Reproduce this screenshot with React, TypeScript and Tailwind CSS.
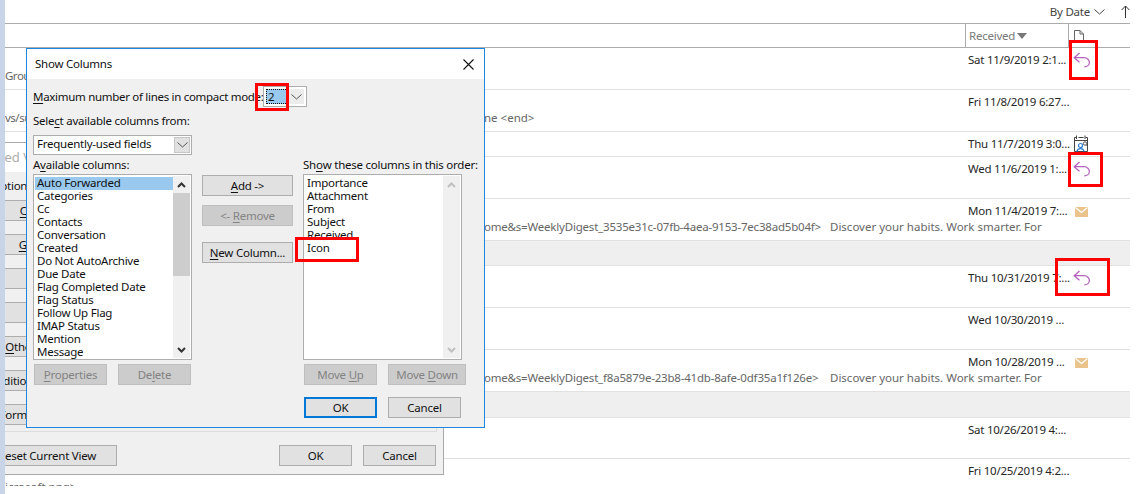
import React from "react";

const Reply = () => (
  <svg width="18" height="16" viewBox="0 0 18 16" fill="none" stroke="#b562be" strokeWidth="1.3" className="block">
    <path d="M6.5 1 L1.2 5.7 L6.5 10.2 M1.2 5.7 H11 C14.2 5.7 16.4 8 16.4 10.4 C16.4 12.8 14.2 14.8 11.3 14.8" />
  </svg>
);

const Envelope = () => (
  <svg width="13" height="10" viewBox="0 0 13 10" className="block">
    <rect width="13" height="10" fill="#eac48c" />
    <path d="M0.5 0.5 L6.5 5.5 L12.5 0.5" fill="none" stroke="#fff" strokeWidth="1.2" />
  </svg>
);

const CalendarIcon = () => (
  <svg width="16" height="17" viewBox="0 0 16 17" fill="none" className="block">
    <path d="M3.5 2.5H1.5V16.5H14.5V2.5H12.5M5.5 2.5H10.5" stroke="#444" />
    <path d="M3.5 0.5V4M12 0.5V4" stroke="#444" />
    <path d="M1.5 5.5H14.5" stroke="#444" />
    <circle cx="7.5" cy="10.5" r="2" stroke="#2b7cd3" strokeWidth="1.2" />
    <path d="M4 16.5C4.3 14.6 5.7 13.6 7.5 13.6C9.3 13.6 10.7 14.6 11 16.5" stroke="#2b7cd3" strokeWidth="1.3" />
    <circle cx="12" cy="8.5" r="1.7" stroke="#555" />
    <path d="M13.2 10L14.8 11.6" stroke="#555" />
  </svg>
);

const FileIcon = () => (
  <svg width="10" height="12" viewBox="0 0 10 12" fill="none" stroke="#666" className="block">
    <path d="M0.5 0.5H6L9.5 4V11.5H0.5Z M6 0.5V4H9.5" />
  </svg>
);

const Chevron = ({ color = "#555" }: { color?: string }) => (
  <svg width="11" height="6" viewBox="0 0 11 6" fill="none" stroke={color} strokeWidth="1" className="block">
    <path d="M0.5 0.5 L5.5 5 L10.5 0.5" />
  </svg>
);

const ArrowUpSmall = ({ color = "#333" }: { color?: string }) => (
  <svg width="9" height="6" viewBox="0 0 9 6" fill="none" stroke={color} strokeWidth="2" className="block">
    <path d="M1 5 L4.5 1.5 L8 5" />
  </svg>
);

const ArrowDownSmall = ({ color = "#333" }: { color?: string }) => (
  <svg width="9" height="6" viewBox="0 0 9 6" fill="none" stroke={color} strokeWidth="2" className="block">
    <path d="M1 1 L4.5 4.5 L8 1" />
  </svg>
);

type RowProps = {
  date?: string;
  icon?: React.ReactNode;
  left?: string;
  preview?: React.ReactNode;
  h: string;
};

const Row = ({ date, icon, left, preview, h }: RowProps) => (
  <div className={`${h} box-border border-b border-[#e1e1e1] overflow-hidden pt-[5px]`}>
    <div className="flex h-[15px] items-center pl-[963px]">
      <span className="w-[104px] mb-[2px] text-[#262626] whitespace-nowrap">{date}</span>
      <span className="ml-[3px]">{icon}</span>
    </div>
    <div className="relative flex h-[15px] items-center text-[#666] whitespace-pre">
      <span className="tracking-[-0.5px]">{left}</span>
      {preview && <span className="absolute left-[479px] tracking-normal">{preview}</span>}
    </div>
  </div>
);

const Digest = ({ id }: { id: string }) => (
  <span className="flex">
    <span className="w-[346px] tracking-[-0.2px]">ome&amp;s=WeeklyDigest_{id}&gt;</span>
    <span className="w-[194px]">Discover your habits. Work smarter.</span>
    <span>For</span>
  </span>
);

const Btn = ({
  children,
  w,
  disabled,
  primary,
}: {
  children: React.ReactNode;
  w: string;
  disabled?: boolean;
  primary?: boolean;
}) => (
  <div
    className={`${w} h-[21px] box-border flex items-center justify-center whitespace-nowrap ${
      primary
        ? "border-2 border-[#0078d7] bg-[#e1e1e1] text-[#111]"
        : disabled
          ? "border border-[#bfbfbf] bg-[#cccccc] text-[#838383]"
          : "border border-[#adadad] bg-[#e1e1e1] text-[#111]"
    }`}
  >
    {children}
  </div>
);

const available = [
  "Auto Forwarded",
  "Categories",
  "Cc",
  "Contacts",
  "Conversation",
  "Created",
  "Do Not AutoArchive",
  "Due Date",
  "Flag Completed Date",
  "Flag Status",
  "Follow Up Flag",
  "IMAP Status",
  "Mention",
  "Message",
];

const shown = ["Importance", "Attachment", "From", "Subject", "Received", "Icon"];

const U = ({ children }: { children: React.ReactNode }) => <span className="underline underline-offset-2">{children}</span>;

const UnderDialog = () => (
  <div className="absolute left-[-45px] top-[142px] w-[489px] h-[333px] box-border border border-[#a9a9a9] bg-white flex flex-col">
    <div className="h-[29px] flex items-center text-[#adadad] whitespace-nowrap">
      <span className="ml-[4px] text-[13px] tracking-normal">Advanced View Settings: Compact</span>
    </div>
    <div className="flex-1 bg-[#f0f0f0] pl-[21px] flex flex-col">
      <div className="mt-[6px] h-[15px] flex items-center whitespace-nowrap text-[#111]">
        <span className="ml-[-9px]">Description</span>
      </div>
      <div className="mt-[7px] flex flex-col gap-[13px] pb-[6px] border-b border-r border-[#dcdcdc] mr-[6px]">
        <Btn w="w-[140px]"><span><U>C</U>olumns...</span></Btn>
        <Btn w="w-[140px]"><span><U>G</U>roup By...</span></Btn>
        <Btn w="w-[140px]"><span><U>S</U>ort...</span></Btn>
        <Btn w="w-[140px]"><span><U>F</U>ilter...</span></Btn>
        <Btn w="w-[140px]"><span><U>O</U>ther Settings...</span></Btn>
        <Btn w="w-[140px]"><span>Conditional Formatting...</span></Btn>
        <Btn w="w-[140px]"><span>Form<U>a</U>t Columns...</span></Btn>
      </div>
      <div className="mt-[13px] flex">
        <Btn w="w-[140px]">Reset Current View</Btn>
        <div className="ml-[162px]"><Btn w="w-[73px]">OK</Btn></div>
        <div className="ml-[11px]"><Btn w="w-[73px]">Cancel</Btn></div>
      </div>
    </div>
  </div>
);

const ShowColumns = () => (
  <div className="absolute left-[26px] top-[48px] w-[459px] h-[380px] box-border border border-[#1e86dc] bg-[#f0f0f0] flex flex-col text-[#111]">
    <div className="h-[30px] bg-white flex items-center justify-between pl-[8px] pr-[10px] shrink-0">
      <span className="mb-[2px]">Show Columns</span>
      <svg width="11" height="11" viewBox="0 0 11 11" stroke="#111" strokeWidth="1.1" className="block">
        <path d="M0.5 0.5L10.5 10.5M10.5 0.5L0.5 10.5" />
      </svg>
    </div>
    <div className="pl-[6px]">
      <div className="mt-[7px] flex items-center h-[21px]">
        <span className="w-[230px] whitespace-nowrap tracking-[-0.3px]"><U>M</U>aximum number of lines in compact mode:</span>
        <div className="w-[44px] h-[21px] box-border border border-[#adadad] bg-white flex items-center p-[2px]">
          <div className="w-[22px] h-[15px] box-border bg-[#99c9ef] border border-dotted border-[#111] flex items-center pl-[1px]">2</div>
          <div className="flex-1 h-full bg-[#ececec] flex items-center justify-center"><Chevron /></div>
        </div>
      </div>
      <div className="mt-[7px] h-[15px] pb-[2px] flex items-center whitespace-nowrap">Sele<U>c</U>t available columns from:</div>
      <div className="mt-[6px] w-[159px] h-[20px] box-border border border-[#adadad] bg-white flex items-center justify-between pl-[3px]">
        <span className="mb-[3px]">Frequently-used fields</span>
        <div className="w-[16px] h-[16px] mr-[1px] bg-[#e1e1e1] border border-[#c6c6c6] box-border flex items-center justify-center"><Chevron /></div>
      </div>
      <div className="mt-[2px] flex gap-[10px]">
        <div className="w-[159px]">
          <div className="h-[17px] pb-[2px] flex items-center whitespace-nowrap">A<U>v</U>ailable columns:</div>
          <div className="h-[186px] box-border border border-[#adadad] bg-white flex p-[1px]">
            <div className="flex-1 pt-[1px]">
              {available.map((t, i) => (
                <div key={t} className={`h-[13px] box-border pb-[2px] flex items-center pl-[2px] ${i === 0 ? "bg-[#99c9ef]" : ""}`}>{t}</div>
              ))}
            </div>
            <div className="w-[17px] bg-[#f0f0f0] flex flex-col">
              <div className="h-[17px] flex items-center justify-center"><ArrowUpSmall /></div>
              <div className="h-[83px] bg-[#cdcdcd]" />
              <div className="flex-1" />
              <div className="h-[17px] flex items-center justify-center"><ArrowDownSmall /></div>
            </div>
          </div>
          <div className="mt-[4px] pl-[1px] flex gap-[11px]">
            <Btn w="w-[73px]" disabled><span><U>P</U>roperties</span></Btn>
            <Btn w="w-[73px]" disabled><span>De<U>l</U>ete</span></Btn>
          </div>
        </div>
        <div className="w-[91px] pt-[18px]">
          <Btn w="w-[91px]"><span><U>A</U>dd -&gt;</span></Btn>
          <div className="mt-[9px]"><Btn w="w-[91px]" disabled><span>&lt;- <U>R</U>emove</span></Btn></div>
          <div className="mt-[16px]"><Btn w="w-[91px]"><span><U>N</U>ew Column...</span></Btn></div>
        </div>
        <div className="w-[175px]">
          <div className="h-[17px] pb-[2px] flex items-center whitespace-nowrap">Sh<U>o</U>w these columns in this order:</div>
          <div className="w-[159px] h-[186px] box-border border border-[#adadad] bg-white flex p-[1px]">
            <div className="flex-1 pt-[1px]">
              {shown.map((t) => (
                <div key={t} className="h-[13px] box-border pb-[2px] flex items-center pl-[2px]">{t}</div>
              ))}
            </div>
            <div className="w-[17px] bg-[#f0f0f0] flex flex-col justify-between">
              <div className="h-[17px] flex items-center justify-center"><ArrowUpSmall color="#c0c0c0" /></div>
              <div className="h-[17px] flex items-center justify-center"><ArrowDownSmall color="#c0c0c0" /></div>
            </div>
          </div>
          <div className="mt-[4px] pl-[1px] flex gap-[11px]">
            <Btn w="w-[73px]" disabled><span>Move <U>U</U>p</span></Btn>
            <Btn w="w-[78px]" disabled><span>Move <U>D</U>own</span></Btn>
          </div>
          <div className="mt-[12px] pl-[1px] flex gap-[11px]">
            <Btn w="w-[73px]" primary>OK</Btn>
            <Btn w="w-[73px]">Cancel</Btn>
          </div>
        </div>
      </div>
    </div>
  </div>
);

const RedBox = ({ c }: { c: string }) => <div className={`absolute box-border border-[3px] border-[#ff0000] ${c}`} />;

export default function App() {
  return (
    <div className="relative w-[1143px] h-[494px] overflow-hidden bg-white font-['Noto_Sans',sans-serif] text-[11.5px] leading-[13px] tracking-[-0.24px]">
      <div className="flex h-full">
        <div className="w-[5px] bg-[#c8d5e8] relative z-10 shrink-0" />
        <div className="w-[1125px]">
          <div className="h-[23px] flex items-center justify-end text-[#444]">
            <span>By Date</span>
            <span className="ml-[4px] mr-[16px]"><Chevron color="#444" /></span>
            <svg width="9" height="13" viewBox="0 0 9 13" fill="none" stroke="#333" className="block">
              <path d="M4.5 13V1M0.6 5L4.5 1L8.4 5" />
            </svg>
          </div>
          <div className="h-[25px] box-border border-y border-[#ababab] flex items-center pl-[960px]">
            <div className="h-full w-[103px] border-l border-[#ababab] flex items-center pl-[3px] text-[#7a7a7a]">
              <span>Received</span>
              <svg width="10" height="6" viewBox="0 0 10 6" className="ml-[2px] block"><path d="M0 0H10L5 6Z" fill="#777" /></svg>
            </div>
            <div className="h-full border-l border-[#ababab] flex items-center pl-[5px]"><FileIcon /></div>
          </div>
          <Row h="h-[42px]" date="Sat 11/9/2019 2:1..." icon={<div className="-ml-[2px] -mt-[2px]"><Reply /></div>} left="Grou" />
          <Row h="h-[42px]" date="Fri 11/8/2019 6:27..." left="vs/su" preview="ne <end>" />
          <Row h="h-[25px]" date="Thu 11/7/2019 3:0..." icon={<div className="-mt-[2px] -ml-[2px]"><CalendarIcon /></div>} />
          <Row h="h-[42px]" date="Wed 11/6/2019 1:..." icon={<div className="-ml-[2px] -mt-[2px]"><Reply /></div>} />
          <Row h="h-[42px]" date="Mon 11/4/2019 7:..." icon={<Envelope />} preview={<Digest id="3535e31c-07fb-4aea-9153-7ec38ad5b04f" />} />
          <div className="h-[25px] box-border border-b border-[#e1e1e1] bg-[#efefef]" />
          <Row h="h-[42px]" date="Thu 10/31/2019 7:..." icon={<div className="-ml-[2px] -mt-[2px]"><Reply /></div>} />
          <Row h="h-[42px]" date="Wed 10/30/2019 ..." />
          <Row h="h-[42px]" date="Mon 10/28/2019 ..." icon={<Envelope />} preview={<Digest id="f8a5879e-23b8-41db-8afe-0df35a1f126e" />} />
          <div className="h-[26px] box-border border-b border-[#e1e1e1] bg-[#efefef]" />
          <Row h="h-[41px]" date="Sat 10/26/2019 4:..." />
          <div className="h-[27px] overflow-hidden pt-[5px]">
            <div className="flex h-[15px] pb-[2px] items-center pl-[963px] text-[#262626] whitespace-nowrap">Fri 10/25/2019 4:2...</div>
            <div className="h-[15px] flex items-center text-[#666] tracking-normal">icrosoft.png&gt;</div>
          </div>
        </div>
      </div>
      <UnderDialog />
      <ShowColumns />
      <RedBox c="left-[255px] top-[83px] w-[34px] h-[28px]" />
      <RedBox c="left-[295px] top-[237px] w-[64px] h-[25px]" />
      <RedBox c="left-[1069px] top-[40px] w-[29px] h-[40px]" />
      <RedBox c="left-[1068px] top-[152px] w-[35px] h-[35px]" />
      <RedBox c="left-[1055px] top-[258px] w-[55px] h-[38px]" />
    </div>
  );
}
